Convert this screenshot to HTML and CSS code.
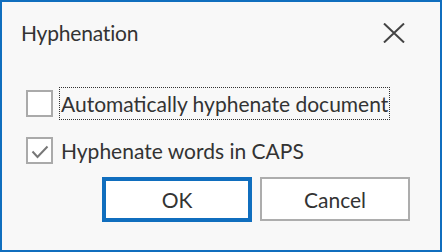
FILE: index.html
```html
<!DOCTYPE html>
<html lang="en">
<head>
  <meta charset="UTF-8">
  <title>Hyphenation</title>
  <link rel="stylesheet" href="styles.css">
</head>
<body>

<div class="dialog">
  <div class="titlebar">
    <span class="title">Hyphenation</span>
    <button class="close" aria-label="Close">
      <svg width="22" height="20" viewBox="0 0 22 20">
        <path d="M1 0.5 L21 19.5 M21 0.5 L1 19.5" stroke="#444" stroke-width="2" fill="none"/>
      </svg>
    </button>
  </div>

  <div class="options">
    <label class="option">
      <span class="box"></span>
      <span class="text focused">Automatically hyphenate document</span>
    </label>
    <label class="option">
      <span class="box">
        <svg width="23" height="23" viewBox="0 0 23 23">
          <path d="M4.5 12.5 L9.5 18 L19.5 7.5" stroke="#777" stroke-width="2" fill="none"/>
        </svg>
      </span>
      <span class="text">Hyphenate words in CAPS</span>
    </label>
  </div>

  <div class="buttons">
    <button class="btn default">OK</button>
    <button class="btn">Cancel</button>
  </div>
</div>

</body>
</html>
```

FILE: styles.css
```css
html, body { margin: 0; padding: 0; }
body { font-family: Lato, "Liberation Sans", sans-serif; color: #333; }
.dialog { width: 442px; height: 252px; box-sizing: border-box; border: 2px solid #106ebe; background: #f8f8f8; }
.titlebar { height: 61px; display: flex; align-items: center; justify-content: space-between; padding: 0 35px 0 19px; }
.title { font-size: 21px; letter-spacing: -0.2px; }
.close { border: none; background: none; padding: 0; width: 22px; height: 20px; display: flex; }
.options { display: flex; flex-direction: column; gap: 14px; padding: 24px 0 0 24px; }
.option { display: flex; align-items: center; gap: 6px; height: 33px; font-size: 21px; }
.box { width: 23px; height: 23px; border: 2px solid #aaa; background: #fff; display: flex; }
.text { padding: 0 1px 0 1px; height: 31px; line-height: 31px; border: 1px solid transparent; }
.text.focused { border: 1px dotted #333; }
.buttons { display: flex; justify-content: flex-end; align-items: flex-start; gap: 8px; padding: 10px 30px 0 0; }
.btn { width: 150px; height: 44px; box-sizing: border-box; background: #fff; border: 2px solid #adadad; font-family: inherit; font-size: 21px; color: #333; padding: 0; }
.btn.default { border: 4px solid #106ebe; height: 45px; }
```
